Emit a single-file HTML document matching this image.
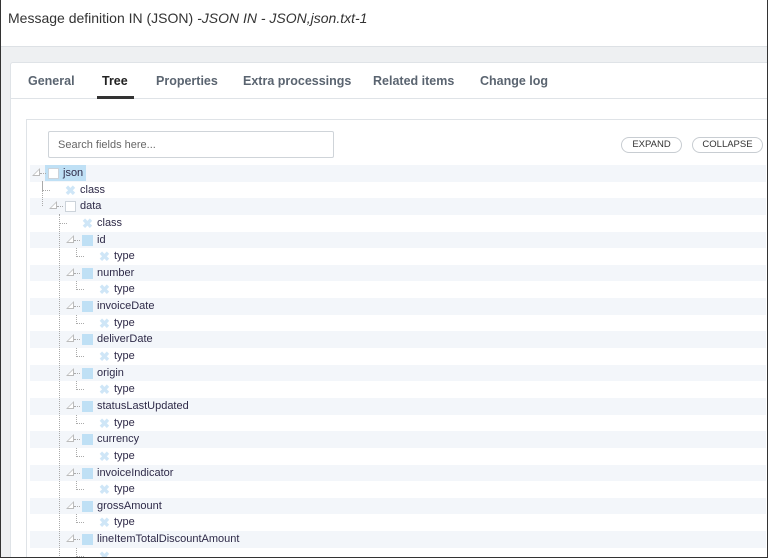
<!DOCTYPE html>
<html><head><style>
*{box-sizing:border-box;margin:0;padding:0}
html,body{width:768px;height:558px;overflow:hidden}
body{font-family:"Liberation Sans",sans-serif;background:#eef0f2;position:relative}
.frame{position:absolute;left:0;top:0;width:768px;height:558px;border:1px solid #333;border-top:none;pointer-events:none;z-index:10}
.title{position:absolute;left:0;top:0;width:768px;height:47px;background:#fff;border-bottom:1px solid #dde1e5;padding:10px 0 0 8px;font-size:14px;color:#333}
.card{position:absolute;left:10px;top:62px;width:770px;height:520px;background:#fff;border:1px solid #dfe3e7;border-radius:3px}
.tabs{position:absolute;left:0;top:0;width:100%;height:36px;border-bottom:1px solid #dfe3e7}
.tab{position:absolute;top:11px;font-size:12.5px;color:#5a6470;font-weight:bold}
.tab.act{color:#222}
.ul{position:absolute;left:86px;top:33px;width:37px;height:3px;background:#333}
.panel{position:absolute;left:26px;top:119px;width:760px;height:460px;background:#fff;border:1px solid #dfe3e7;border-right:none}
.search{position:absolute;left:48px;top:131px;width:286px;height:27px;border:1px solid #cfd4d9;border-radius:2px;font-size:11px;color:#666;padding:7px 0 0 9px}
.btn{position:absolute;top:137px;height:16px;border:1px solid #c8cdd2;border-radius:8px;font-size:9.5px;color:#333;text-align:center;line-height:14px}
.row{position:absolute;left:30px;width:736px;height:16.64px}
.row.l{background:#f3f6fa}
.lab{position:absolute;font-size:11px;color:#2e2a48;top:2px}
.box{position:absolute;width:11px;height:11px;top:3px}
.e{border:1px solid #ccd3da;background:#fff}
.f{background:#bfe0f5}
.x{color:#cfe6f7;font-size:13px;line-height:11px;font-weight:bold}
.tri{position:absolute;top:3px;width:0;height:0;border-left:8px solid transparent;border-bottom:8px solid #bbb}
.tri:after{content:"";position:absolute;left:-6px;top:2px;border-left:5px solid transparent;border-bottom:5px solid #fff}
.dh{position:absolute;top:8px;width:6px;border-top:1px dotted #aaa}
.vl{position:absolute;border-left:1px dotted #aaa}
</style></head><body>
<div class="title">Message definition IN (JSON) <i>-JSON IN - JSON,json.txt-1</i></div>
<div class="card">
 <div class="tabs">
  <span class="tab" style="left:17px">General</span>
  <span class="tab act" style="left:91px">Tree</span>
  <span class="tab" style="left:145px">Properties</span>
  <span class="tab" style="left:232px">Extra processings</span>
  <span class="tab" style="left:362px">Related items</span>
  <span class="tab" style="left:469px">Change log</span>
  <div class="ul"></div>
 </div>
</div>
<div class="panel"></div>
<div class="search">Search fields here...</div>
<div class="btn" style="left:621px;width:61px">EXPAND</div>
<div class="btn" style="left:692px;width:71px">COLLAPSE</div>
<div id="tree"></div>
<div class="frame"></div>
<script>
var rows=[["json",0,"e",1],["class",1,"x"],["data",1,"e",1],["class",2,"x"]];
["id","number","invoiceDate","deliverDate","origin","statusLastUpdated","currency","invoiceIndicator","grossAmount"].forEach(function(n){rows.push([n,2,"f",1]);rows.push(["type",3,"x"]);});
rows.push(["lineItemTotalDiscountAmount",2,"f",1]);rows.push(["",3,"x"]);
var h="";
rows.forEach(function(r,i){
 var top=165+i*16.64, base=17*r[1];
 h+='<div class="row'+(i%2==0?' l':'')+'" style="top:'+top+'px">';
 var bx=18+base, tx=33+base;
 if(i==0) h+='<div style="position:absolute;left:15px;top:0;width:41px;height:16px;background:#bfe0f5"></div>';
 if(r[3]) h+='<div class="tri" style="left:'+(base+2)+'px"></div><div class="dh" style="left:'+(base+10)+'px"></div>';
 else h+='<div class="vl" style="left:'+(base-5)+'px;top:0;height:9px"></div><div class="dh" style="left:'+(base-5)+'px;width:8px"></div>';
 if(r[2]=="x") h+='<div class="box x" style="left:'+bx+'px">&#10006;</div>';
 else h+='<div class="box '+r[2]+'" style="left:'+bx+'px"></div>';
 h+='<div class="lab" style="left:'+tx+'px">'+r[0]+'</div></div>';
});
h+='<div class="vl" style="left:42px;top:181px;height:25px"></div>';
h+='<div class="vl" style="left:59px;top:214px;height:344px"></div>';
document.getElementById("tree").innerHTML=h;
</script>
</body></html>
